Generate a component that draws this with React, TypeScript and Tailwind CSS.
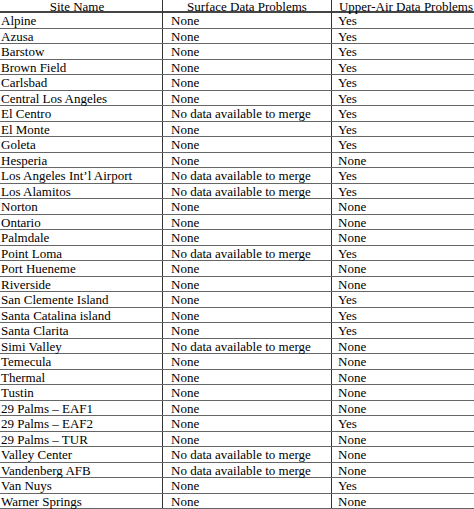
const rows: [string, string, string][] = [
  ["Alpine", "None", "Yes"],
  ["Azusa", "None", "Yes"],
  ["Barstow", "None", "Yes"],
  ["Brown Field", "None", "Yes"],
  ["Carlsbad", "None", "Yes"],
  ["Central Los Angeles", "None", "Yes"],
  ["El Centro", "No data available to merge", "Yes"],
  ["El Monte", "None", "Yes"],
  ["Goleta", "None", "Yes"],
  ["Hesperia", "None", "None"],
  ["Los Angeles Int\u2019l Airport", "No data available to merge", "Yes"],
  ["Los Alamitos", "No data available to merge", "Yes"],
  ["Norton", "None", "None"],
  ["Ontario", "None", "None"],
  ["Palmdale", "None", "None"],
  ["Point Loma", "No data available to merge", "Yes"],
  ["Port Hueneme", "None", "None"],
  ["Riverside", "None", "None"],
  ["San Clemente Island", "None", "Yes"],
  ["Santa Catalina island", "None", "Yes"],
  ["Santa Clarita", "None", "Yes"],
  ["Simi Valley", "No data available to merge", "None"],
  ["Temecula", "None", "None"],
  ["Thermal", "None", "None"],
  ["Tustin", "None", "None"],
  ["29 Palms \u2013 EAF1", "None", "None"],
  ["29 Palms \u2013 EAF2", "None", "Yes"],
  ["29 Palms \u2013 TUR", "None", "None"],
  ["Valley Center", "No data available to merge", "None"],
  ["Vandenberg AFB", "No data available to merge", "None"],
  ["Van Nuys", "None", "Yes"],
  ["Warner Springs", "None", "None"],
];

export default function App() {
  return (
    <div
      className="w-[474px] h-[509px] overflow-hidden bg-white text-black text-[13px] leading-none"
      style={{ fontFamily: '"Liberation Serif", "Times New Roman", serif' }}
    >
      {/* header */}
      <div className="grid grid-cols-[162px_169px_143px] h-[13px] border-b-2 border-[#444]">
        <div className="flex items-end justify-center pb-[2px] pr-[8px]">Site Name</div>
        <div className="flex items-end justify-center pb-[2px] border-l-[1.5px] border-[#333]">
          Surface Data Problems
        </div>
        <div className="flex items-end justify-end pb-[2px] pr-[1px] whitespace-nowrap border-l-[1.5px] border-[#333]">
          Upper-Air Data Problems
        </div>
      </div>
      {rows.map(([site, surf, upper], i) => (
        <div
          key={i}
          className="grid grid-cols-[162px_169px_143px] h-[15.5px] border-b-[1.5px] border-[#666]"
        >
          <div className="flex items-center pt-[1px] pl-[1px] whitespace-nowrap">{site}</div>
          <div className="flex items-center pt-[1px] pl-[8px] whitespace-nowrap border-l-[1.5px] border-[#333]">
            {surf}
          </div>
          <div className="flex items-center pt-[1px] pl-[6px] whitespace-nowrap border-l-[1.5px] border-[#333]">
            {upper}
          </div>
        </div>
      ))}
    </div>
  );
}
